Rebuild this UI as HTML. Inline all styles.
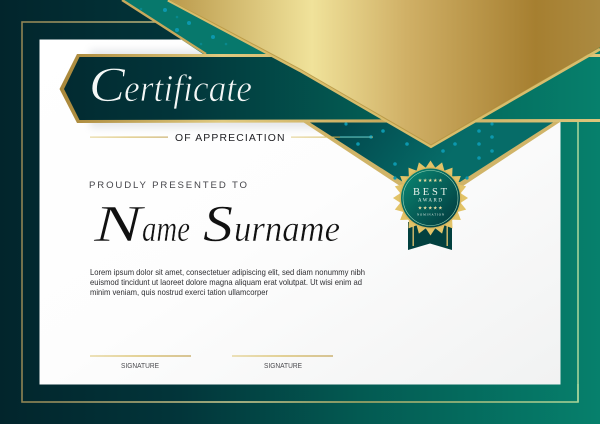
<!DOCTYPE html>
<html><head><meta charset="utf-8"><style>html,body{margin:0;padding:0;background:#fff}svg{display:block}</style></head>
<body>
<svg xmlns="http://www.w3.org/2000/svg" width="600" height="424" viewBox="0 0 600 424">
<defs>
<linearGradient id="bg" x1="0" y1="0" x2="600" y2="0" gradientUnits="userSpaceOnUse"><stop offset="0" stop-color="#02252c"/><stop offset=".3" stop-color="#02353a"/><stop offset=".6" stop-color="#035a52"/><stop offset="1" stop-color="#06806c"/></linearGradient>
<linearGradient id="wh" x1="0" y1="0" x2="1" y2="1"><stop offset="0" stop-color="#fff"/><stop offset=".5" stop-color="#fdfdfd"/><stop offset="1" stop-color="#f1f2f2"/></linearGradient>
<linearGradient id="gold" x1="170" y1="0" x2="600" y2="0" gradientUnits="userSpaceOnUse"><stop offset="0" stop-color="#bb9a4c"/><stop offset=".33" stop-color="#f0e29a"/><stop offset=".55" stop-color="#d0b066"/><stop offset=".85" stop-color="#a67f30"/><stop offset="1" stop-color="#ab8a40"/></linearGradient>
<linearGradient id="gl" x1="60" y1="0" x2="600" y2="0" gradientUnits="userSpaceOnUse"><stop offset="0" stop-color="#a9873a"/><stop offset=".3" stop-color="#e0ca80"/><stop offset=".6" stop-color="#c9a95c"/><stop offset="1" stop-color="#dcc67c"/></linearGradient>
<linearGradient id="fl" x1="0" y1="0" x2="600" y2="0" gradientUnits="userSpaceOnUse"><stop offset="0" stop-color="#8a7d4e"/><stop offset=".4" stop-color="#c6c78e"/><stop offset=".6" stop-color="#a6a765"/><stop offset="1" stop-color="#a3d49a"/></linearGradient>
<linearGradient id="ln" x1="0" y1="0" x2="1" y2="0"><stop offset="0" stop-color="#e2cf8c"/><stop offset=".5" stop-color="#d4b654"/><stop offset="1" stop-color="#c0a050"/></linearGradient>
<linearGradient id="sl" x1="0" y1="0" x2="1" y2="1"><stop offset="0" stop-color="#0a8a75"/><stop offset="1" stop-color="#02353b"/></linearGradient>
<linearGradient id="v" x1="340" y1="122" x2="430" y2="185" gradientUnits="userSpaceOnUse"><stop offset="0" stop-color="#02474c"/><stop offset="1" stop-color="#066c68"/></linearGradient>
<filter id="b" x="-20%" y="-100%" width="140%" height="300%"><feGaussianBlur stdDeviation="4"/></filter>
<polygon id="t" points="425.2,168.5 430.5,160.5 435.8,168.5" fill="#e2c368"/>
</defs>
<rect width="600" height="424" fill="url(#bg)"/>
<rect x="22" y="22" width="556" height="380" fill="none" stroke="url(#fl)" stroke-width="1.6"/>
<rect x="39.5" y="39.5" width="521" height="345" fill="url(#wh)"/>
<clipPath id="c"><rect x="39.5" y="39.5" width="521" height="345"/></clipPath>
<g clip-path="url(#c)"><rect x="90" y="50" width="260" height="78" fill="#8a94a0" opacity=".22" filter="url(#b)"/></g>
<rect x="560.5" y="122" width="39.5" height="262" fill="url(#bg)"/>
<rect x="577.2" y="122" width="1.6" height="280" fill="#a3d49a"/>

<!-- teal upper stripe -->
<polygon points="122,0 175,0 300,72 470,118 206,56" fill="#07786c"/>
<polyline points="122,0 206,54" fill="none" stroke="#c9a95c" stroke-width="2.4"/>
<g fill="#0c98ae">
<circle cx="165" cy="10" r="2"/><circle cx="189" cy="23" r="2"/><circle cx="177" cy="30" r="2"/><circle cx="213" cy="37" r="2"/><circle cx="141" cy="9" r="1.3" opacity=".5"/><circle cx="177" cy="17" r="1.3" opacity=".5"/><circle cx="201" cy="44" r="1.3" opacity=".5"/><circle cx="226" cy="44" r="1.3" opacity=".5"/>
</g>

<!-- banner -->
<polygon points="77,54 600,54 600,122 77,123 59.5,89" fill="url(#gl)"/>
<polygon points="79.5,57 600,57 600,119 79.5,120 64,89" fill="url(#bg)"/>

<!-- lower V -->
<polygon points="303,122 560,122 463,186 400,186" fill="#d0b468"/>
<polygon points="310,122.5 553,122.5 460,182 403,182" fill="url(#v)"/>
<polygon points="400,182 460,182 431,215" fill="#d0b468"/>
<g fill="#0c98ae">
<circle cx="346" cy="124" r="1.6"/><circle cx="383" cy="131" r="1.8"/><circle cx="358" cy="144" r="1.8"/><circle cx="407" cy="144" r="1.8"/><circle cx="455" cy="144" r="1.8"/><circle cx="479" cy="131" r="1.8"/><circle cx="492" cy="124" r="1.6"/><circle cx="492" cy="137" r="1.8"/><circle cx="479" cy="144" r="1.8"/><circle cx="443" cy="151" r="1.8"/><circle cx="395" cy="164" r="1.8"/><circle cx="492" cy="151" r="1.8"/><circle cx="479" cy="158" r="1.8"/><circle cx="371" cy="137" r="1.8"/><circle cx="395" cy="178" r="1.6"/><circle cx="467" cy="178" r="1.6"/>
</g>

<!-- gold top -->
<polygon points="170,0 600,0 600,47 431,147 300,71" fill="url(#gold)"/>
<polyline points="168,0 300,70.5 431,146.5 600,49" fill="none" stroke="#d8bd6c" stroke-width="3"/>
<polyline points="168,-1 300,69 431,145 600,47" fill="none" stroke="#a98632" stroke-width="1" opacity=".6"/>

<!-- text -->
<g font-family="'Liberation Serif',serif" font-style="italic" fill="#f4f7f6" stroke="url(#bg)" stroke-width=".7">
<text x="89" y="101" font-size="50" textLength="36" lengthAdjust="spacingAndGlyphs">C</text>
<text x="124" y="101" font-size="38" textLength="128" lengthAdjust="spacingAndGlyphs">ertificate</text>
</g>

<rect x="90" y="136.6" width="78" height="1" fill="url(#ln)"/>
<rect x="291" y="136.6" width="82" height="1" fill="url(#ln)"/>
<rect x="340" y="136.4" width="32" height="1.2" fill="#4fb6b8"/>
<text x="175" y="141" font-family="'Liberation Sans',sans-serif" font-size="10.4" fill="#1e1e22" textLength="109.500" lengthAdjust="spacing">OF APPRECIATION</text>
<text x="89" y="188" font-family="'Liberation Sans',sans-serif" font-size="9.6" fill="#45454a" textLength="158" lengthAdjust="spacing">PROUDLY PRESENTED TO</text>

<g font-family="'Liberation Serif',serif" font-style="italic" fill="#111" stroke="#fdfdfd" stroke-width=".45">
<text x="94" y="241" font-size="52" textLength="48" lengthAdjust="spacingAndGlyphs">N</text>
<text x="142" y="241" font-size="37" textLength="48" lengthAdjust="spacingAndGlyphs">ame</text>
<text x="203" y="241" font-size="52" textLength="30" lengthAdjust="spacingAndGlyphs">S</text>
<text x="234" y="241" font-size="37" textLength="106" lengthAdjust="spacingAndGlyphs">urname</text>
</g>

<g font-family="'Liberation Sans',sans-serif" font-size="8.1" fill="#2e2e32">
<text x="90" y="275" textLength="275" lengthAdjust="spacingAndGlyphs">Lorem ipsum dolor sit amet, consectetuer adipiscing elit, sed diam nonummy nibh</text>
<text x="90" y="285" textLength="272" lengthAdjust="spacingAndGlyphs">euismod tincidunt ut laoreet dolore magna aliquam erat volutpat. Ut wisi enim ad</text>
<text x="90" y="295" textLength="178" lengthAdjust="spacingAndGlyphs">minim veniam, quis nostrud exerci tation ullamcorper</text>
</g>
<rect x="90" y="355.4" width="101" height="1.2" fill="url(#ln)"/>
<rect x="232" y="355.4" width="101" height="1.2" fill="url(#ln)"/>
<g font-family="'Liberation Sans',sans-serif" font-size="7.2" fill="#4a4a4e">
<text x="121" y="368" textLength="38" lengthAdjust="spacingAndGlyphs">SIGNATURE</text>
<text x="264" y="368" textLength="38" lengthAdjust="spacingAndGlyphs">SIGNATURE</text>
</g>

<!-- ribbon -->
<polygon points="408,222 452,222 452,250 430,243.500 408,250" fill="#02403f"/>
<rect x="412.500" y="224" width="1.400" height="22" fill="#d8bd6c"/><rect x="446.500" y="224" width="1.400" height="22" fill="#d8bd6c"/>

<!-- seal -->
<g>
<use href="#t"/><use href="#t" transform="rotate(18 430.5 198)"/><use href="#t" transform="rotate(36 430.5 198)"/><use href="#t" transform="rotate(54 430.5 198)"/><use href="#t" transform="rotate(72 430.5 198)"/><use href="#t" transform="rotate(90 430.5 198)"/><use href="#t" transform="rotate(108 430.5 198)"/><use href="#t" transform="rotate(126 430.5 198)"/><use href="#t" transform="rotate(144 430.5 198)"/><use href="#t" transform="rotate(162 430.5 198)"/><use href="#t" transform="rotate(180 430.5 198)"/><use href="#t" transform="rotate(198 430.5 198)"/><use href="#t" transform="rotate(216 430.5 198)"/><use href="#t" transform="rotate(234 430.5 198)"/><use href="#t" transform="rotate(252 430.5 198)"/><use href="#t" transform="rotate(270 430.5 198)"/><use href="#t" transform="rotate(288 430.5 198)"/><use href="#t" transform="rotate(306 430.5 198)"/><use href="#t" transform="rotate(324 430.5 198)"/><use href="#t" transform="rotate(342 430.5 198)"/>
</g>
<circle cx="430.5" cy="198" r="31" fill="#d9b85e"/>
<circle cx="430.5" cy="198" r="29.500" fill="url(#sl)"/>
<circle cx="430.5" cy="198" r="27.500" fill="none" stroke="#9fd8b8" stroke-width=".6"/>
<g text-anchor="middle" fill="#e8f2ea" font-family="'Liberation Serif',serif">
<text x="430.5" y="182" font-size="5" fill="#ecdca0" letter-spacing=".6">★★★★★</text>
<text x="430" y="195" font-size="10.500" textLength="34" lengthAdjust="spacing">BEST</text>
<text x="430" y="201.500" font-size="5" textLength="24" lengthAdjust="spacing">AWARD</text>
<text x="430.5" y="209.500" font-size="5" fill="#ecdca0" letter-spacing=".6">★★★★★</text>
<text x="430.5" y="215.500" font-size="3" textLength="27" lengthAdjust="spacing">NOMINATION</text>
</g>
</svg>
</body></html>
